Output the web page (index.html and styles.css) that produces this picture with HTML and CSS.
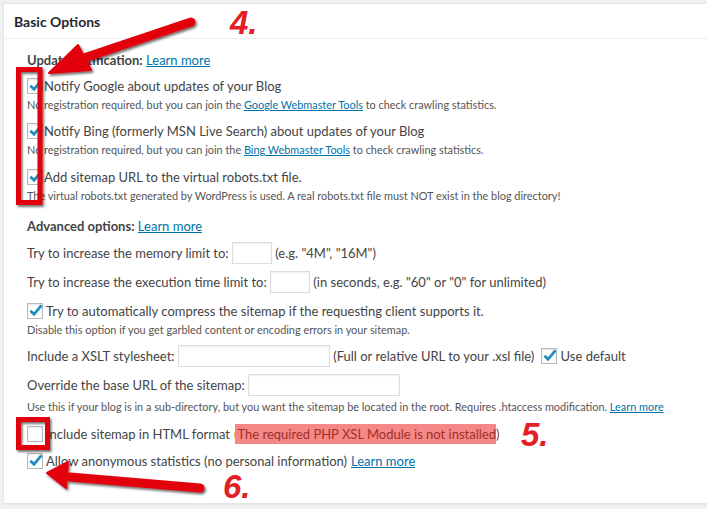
FILE: index.html
```html
<!DOCTYPE html>
<html lang="en">
<head>
<meta charset="utf-8">
<title>Basic Options</title>
<link rel="stylesheet" href="styles.css">
</head>
<body>
<div class="page">
  <div class="card">
    <h3 class="card-title">Basic Options</h3>
    <div class="card-body">
      <div class="section-label"><strong>Update notification:</strong> <a href="#">Learn more</a></div>

      <div class="opt tight">
        <label class="check-row"><span class="cb checked"><svg viewBox="0 0 16 16"><path d="M3.2 8.3 L6.6 11.6 L13.6 3.2"/></svg></span>Notify Google about updates of your Blog</label>
        <div class="desc">No registration required, but you can join the <a href="#">Google Webmaster Tools</a> to check crawling statistics.</div>
      </div>
      <div class="opt tight">
        <label class="check-row"><span class="cb checked"><svg viewBox="0 0 16 16"><path d="M3.2 8.3 L6.6 11.6 L13.6 3.2"/></svg></span>Notify Bing (formerly MSN Live Search) about updates of your Blog</label>
        <div class="desc">No registration required, but you can join the <a href="#">Bing Webmaster Tools</a> to check crawling statistics.</div>
      </div>
      <div class="opt tight">
        <label class="check-row"><span class="cb checked"><svg viewBox="0 0 16 16"><path d="M3.2 8.3 L6.6 11.6 L13.6 3.2"/></svg></span>Add sitemap URL to the virtual robots.txt file.</label>
        <div class="desc">The virtual robots.txt generated by WordPress is used. A real robots.txt file must NOT exist in the blog directory!</div>
      </div>

      <div class="section-label adv"><strong>Advanced options:</strong> <a href="#">Learn more</a></div>

      <div class="field-row first">Try to increase the memory limit to: <span class="input w40"></span> (e.g. "4M", "16M")</div>
      <div class="field-row">Try to increase the execution time limit to: <span class="input w40"></span> (in seconds, e.g. "60" or "0" for unlimited)</div>

      <div class="opt compress">
        <label class="check-row"><span class="cb checked"><svg viewBox="0 0 16 16"><path d="M3.2 8.3 L6.6 11.6 L13.6 3.2"/></svg></span>Try to automatically compress the sitemap if the requesting client supports it.</label>
        <div class="desc">Disable this option if you get garbled content or encoding errors in your sitemap.</div>
      </div>

      <div class="field-row xslt">Include a XSLT stylesheet: <span class="input w152"></span> (Full or relative URL to your .xsl file) <span class="cb checked inline"><svg viewBox="0 0 16 16"><path d="M3.2 8.3 L6.6 11.6 L13.6 3.2"/></svg></span>Use default</div>
      <div class="field-row">Override the base URL of the sitemap: <span class="input w152"></span></div>
      <div class="desc base">Use this if your blog is in a sub-directory, but you want the sitemap be located in the root. Requires .htaccess modification. <a href="#">Learn more</a></div>

      <label class="check-row html-row"><span class="cb"></span>Include sitemap in HTML format <span class="warn">(<span class="warn-hl">The required PHP XSL Module is not installed</span>)</span></label>
      <label class="check-row stats-row"><span class="cb checked"><svg viewBox="0 0 16 16"><path d="M3.2 8.3 L6.6 11.6 L13.6 3.2"/></svg></span>Allow anonymous statistics (no personal information) <a href="#" class="lm">Learn more</a></label>
    </div>
  </div>

  <svg class="annot" viewBox="0 0 707 509" width="707" height="509">
    <defs>
      <filter id="sh" x="-20%" y="-20%" width="140%" height="140%">
        <feDropShadow dx="1.5" dy="2" stdDeviation="1.2" flood-color="#000" flood-opacity="0.55"/>
      </filter>
    </defs>
    <g filter="url(#sh)" fill="#e3000b" stroke="#e3000b">
      <line x1="191" y1="22" x2="78" y2="60" stroke-width="9" stroke-linecap="round"/>
      <polygon points="49,73 91,70 78,45" stroke-width="2" stroke-linejoin="round"/>
      <rect x="18.5" y="69.5" width="21.5" height="133" fill="none" stroke-width="5"/>
      <rect x="18.5" y="419.5" width="29" height="28" fill="none" stroke-width="5"/>
      <line x1="200" y1="488" x2="70" y2="477" stroke-width="9" stroke-linecap="round"/>
      <polygon points="47,473 68,462 66,488" stroke-width="2" stroke-linejoin="round"/>
    </g>
  </svg>
  <div class="num n4">4.</div>
  <div class="num n5">5.</div>
  <div class="num n6">6.</div>
</div>
</body>
</html>
```
FILE: styles.css
```css
html, body {
  margin: 0;
  padding: 0;
}
body {
  background: #f1f1f1;
  overflow: hidden;
  font-family: Lato, "Liberation Sans", sans-serif;
  color: #444;
}
.page {
  position: relative;
  width: 707px;
  height: 509px;
  padding: 3px 0 0 3px;
  box-sizing: border-box;
}
.card {
  width: 730px;
  height: 501px;
  background: #fff;
  border: 1px solid #e5e5e5;
  box-sizing: border-box;
  box-shadow: 0 1px 1px rgba(0,0,0,.04);
}
.card-title {
  margin: 0;
  height: 35px;
  padding: 0 10px;
  font-size: 14px;
  font-weight: 700;
  line-height: 35px;
  color: #23282d;
  border-bottom: 1px solid #eee;
  box-sizing: border-box;
}
.card-body {
  padding: 11px 0 0 23px;
  font-size: 13px;
}
a {
  color: #0073aa;
  text-decoration: underline;
}
.section-label {
  height: 20px;
  line-height: 20px;
}
.section-label strong {
  font-weight: 700;
  color: #444;
}
.section-label.adv {
  margin-top: 12px;
}
.opt {
  margin-top: 5px;
}
.opt + .opt {
  margin-top: 7px;
}
.opt + .opt + .opt {
  margin-top: 8px;
}
.check-row {
  display: flex;
  align-items: center;
  height: 22px;
  white-space: nowrap;
}
.cb {
  position: relative;
  display: inline-block;
  width: 16px;
  height: 16px;
  border: 1px solid #b4b9be;
  background: #fff;
  box-shadow: inset 0 1px 2px rgba(0,0,0,.1);
  box-sizing: border-box;
  margin-right: 3px;
  flex: none;
}
.opt.tight .cb { margin-right: 1px; }
.cb svg {
  position: absolute;
  left: -1px;
  top: -2px;
  width: 17px;
  height: 17px;
  overflow: visible;
}
.cb svg path {
  fill: none;
  stroke: #1e8cbe;
  stroke-width: 2.6;
  stroke-linecap: butt;
  stroke-linejoin: miter;
}
.cb.inline {
  margin-left: 3px;
  margin-right: 4px;
}
.desc {
  font-size: 10.9px;
  line-height: 16px;
  color: #555;
  white-space: nowrap;
}
.field-row {
  display: flex;
  align-items: center;
  height: 29px;
  white-space: pre;
}
.field-row.first {
  margin-top: 2px;
}
.input {
  display: inline-block;
  height: 22px;
  border: 1px solid #ddd;
  box-shadow: inset 0 1px 2px rgba(0,0,0,.07);
  background: #fff;
  box-sizing: border-box;
  flex: none;
}
.w40 { width: 40px; }
.w152 { width: 152px; }
.opt.compress {
  margin-top: 4px;
}
.compress .check-row .cb { margin-right: 3px; }
.field-row.xslt {
  margin-top: 3px;
}
.desc.base {
  margin-top: 0;
}
.html-row {
  margin-top: 8px;
}
.warn {
  color: #a0302a;
  margin-left: 4px;
}
.warn-hl {
  background: #f58787;
  padding: 2px 0;
  margin-left: -2px;
  padding-left: 2px;
}
.stats-row {
  margin-top: 5px;
}
.stats-row .cb { margin-right: 3px; }
.lm { margin-left: 4px; }

.annot {
  position: absolute;
  left: 0;
  top: 0;
  pointer-events: none;
}
.num {
  position: absolute;
  font-family: "Liberation Sans", Arial, sans-serif;
  font-weight: 700;
  font-style: italic;
  font-size: 33px;
  line-height: 1;
  color: #e31e24;
}
.n4 { left: 230px; top: 6px; }
.n5 { left: 521px; top: 418px; }
.n6 { left: 223px; top: 470px; }
```
